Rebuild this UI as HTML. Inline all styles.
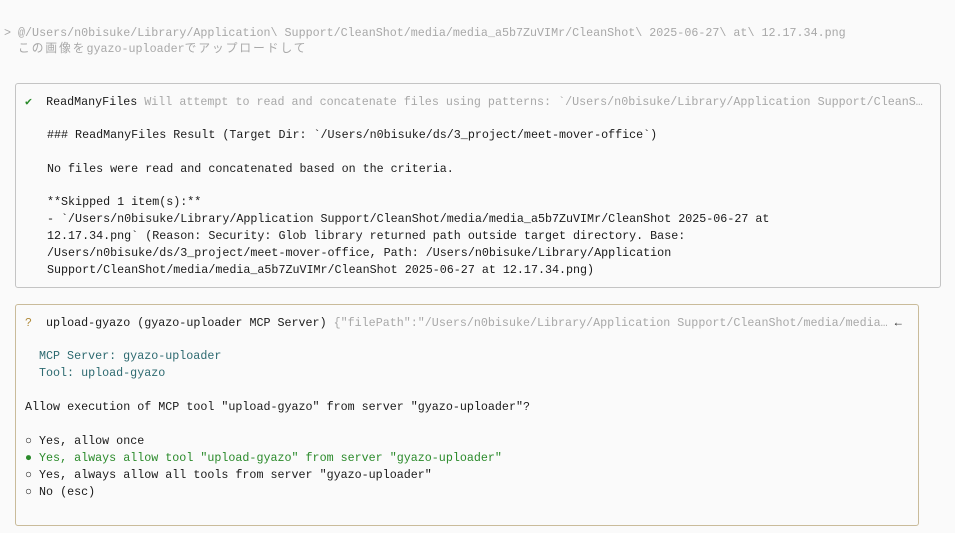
<!DOCTYPE html>
<html><head><meta charset="utf-8"><style>
body{margin:0;width:955px;height:533px;background:#fafafa;overflow:hidden;font-family:"Liberation Mono","Noto Sans CJK JP",monospace;font-size:11.7px;color:#1a1a1a;position:relative}
.l{position:absolute;white-space:pre;line-height:16px;height:16px}
.g{color:#a8a8a8}
.box{position:absolute;border:1px solid #c4c4c4;border-radius:3px}
.t{color:#2d6a70}
.gr{color:#2a8a2a}
.jp{letter-spacing:2px}
</style></head><body>
<div class="l g" style="left:4px;top:25px">&gt; @/Users/n0bisuke/Library/Application\ Support/CleanShot/media/media_a5b7ZuVIMr/CleanShot\ 2025-06-27\ at\ 12.17.34.png</div>
<div class="l g" style="left:18px;top:41px"><span class="jp">この画像を</span>gyazo-uploader<span class="jp">でアップロードして</span></div>
<div class="box" style="left:15px;top:83px;width:924px;height:203px"></div>
<div class="l" style="left:25px;top:94px"><span class="gr">✔</span>  ReadManyFiles <span class="g">Will attempt to read and concatenate files using patterns: `/Users/n0bisuke/Library/Application Support/CleanS…</span></div>
<div class="l" style="left:47px;top:127px">### ReadManyFiles Result (Target Dir: `/Users/n0bisuke/ds/3_project/meet-mover-office`)</div>
<div class="l" style="left:47px;top:161px">No files were read and concatenated based on the criteria.</div>
<div class="l" style="left:47px;top:194px">**Skipped 1 item(s):**</div>
<div class="l" style="left:47px;top:211px">- `/Users/n0bisuke/Library/Application Support/CleanShot/media/media_a5b7ZuVIMr/CleanShot 2025-06-27 at</div>
<div class="l" style="left:47px;top:228px">12.17.34.png` (Reason: Security: Glob library returned path outside target directory. Base:</div>
<div class="l" style="left:47px;top:245px">/Users/n0bisuke/ds/3_project/meet-mover-office, Path: /Users/n0bisuke/Library/Application</div>
<div class="l" style="left:47px;top:262px">Support/CleanShot/media/media_a5b7ZuVIMr/CleanShot 2025-06-27 at 12.17.34.png)</div>
<div class="box" style="left:15px;top:304px;width:902px;height:220px;border-color:#c9bb9a"></div>
<div class="l" style="left:25px;top:315px"><span style="color:#b08a3a">?</span>  upload-gyazo (gyazo-uploader MCP Server) <span class="g">{"filePath":"/Users/n0bisuke/Library/Application Support/CleanShot/media/media… <span style="color:#1a1a1a">←</span></span></div>
<div class="l t" style="left:39px;top:348px">MCP Server: gyazo-uploader</div>
<div class="l t" style="left:39px;top:365px">Tool: upload-gyazo</div>
<div class="l" style="left:25px;top:399px">Allow execution of MCP tool "upload-gyazo" from server "gyazo-uploader"?</div>
<div class="l" style="left:25px;top:433px">○ Yes, allow once</div>
<div class="l gr" style="left:25px;top:450px">● Yes, always allow tool "upload-gyazo" from server "gyazo-uploader"</div>
<div class="l" style="left:25px;top:467px">○ Yes, always allow all tools from server "gyazo-uploader"</div>
<div class="l" style="left:25px;top:484px">○ No (esc)</div>
</body></html>
